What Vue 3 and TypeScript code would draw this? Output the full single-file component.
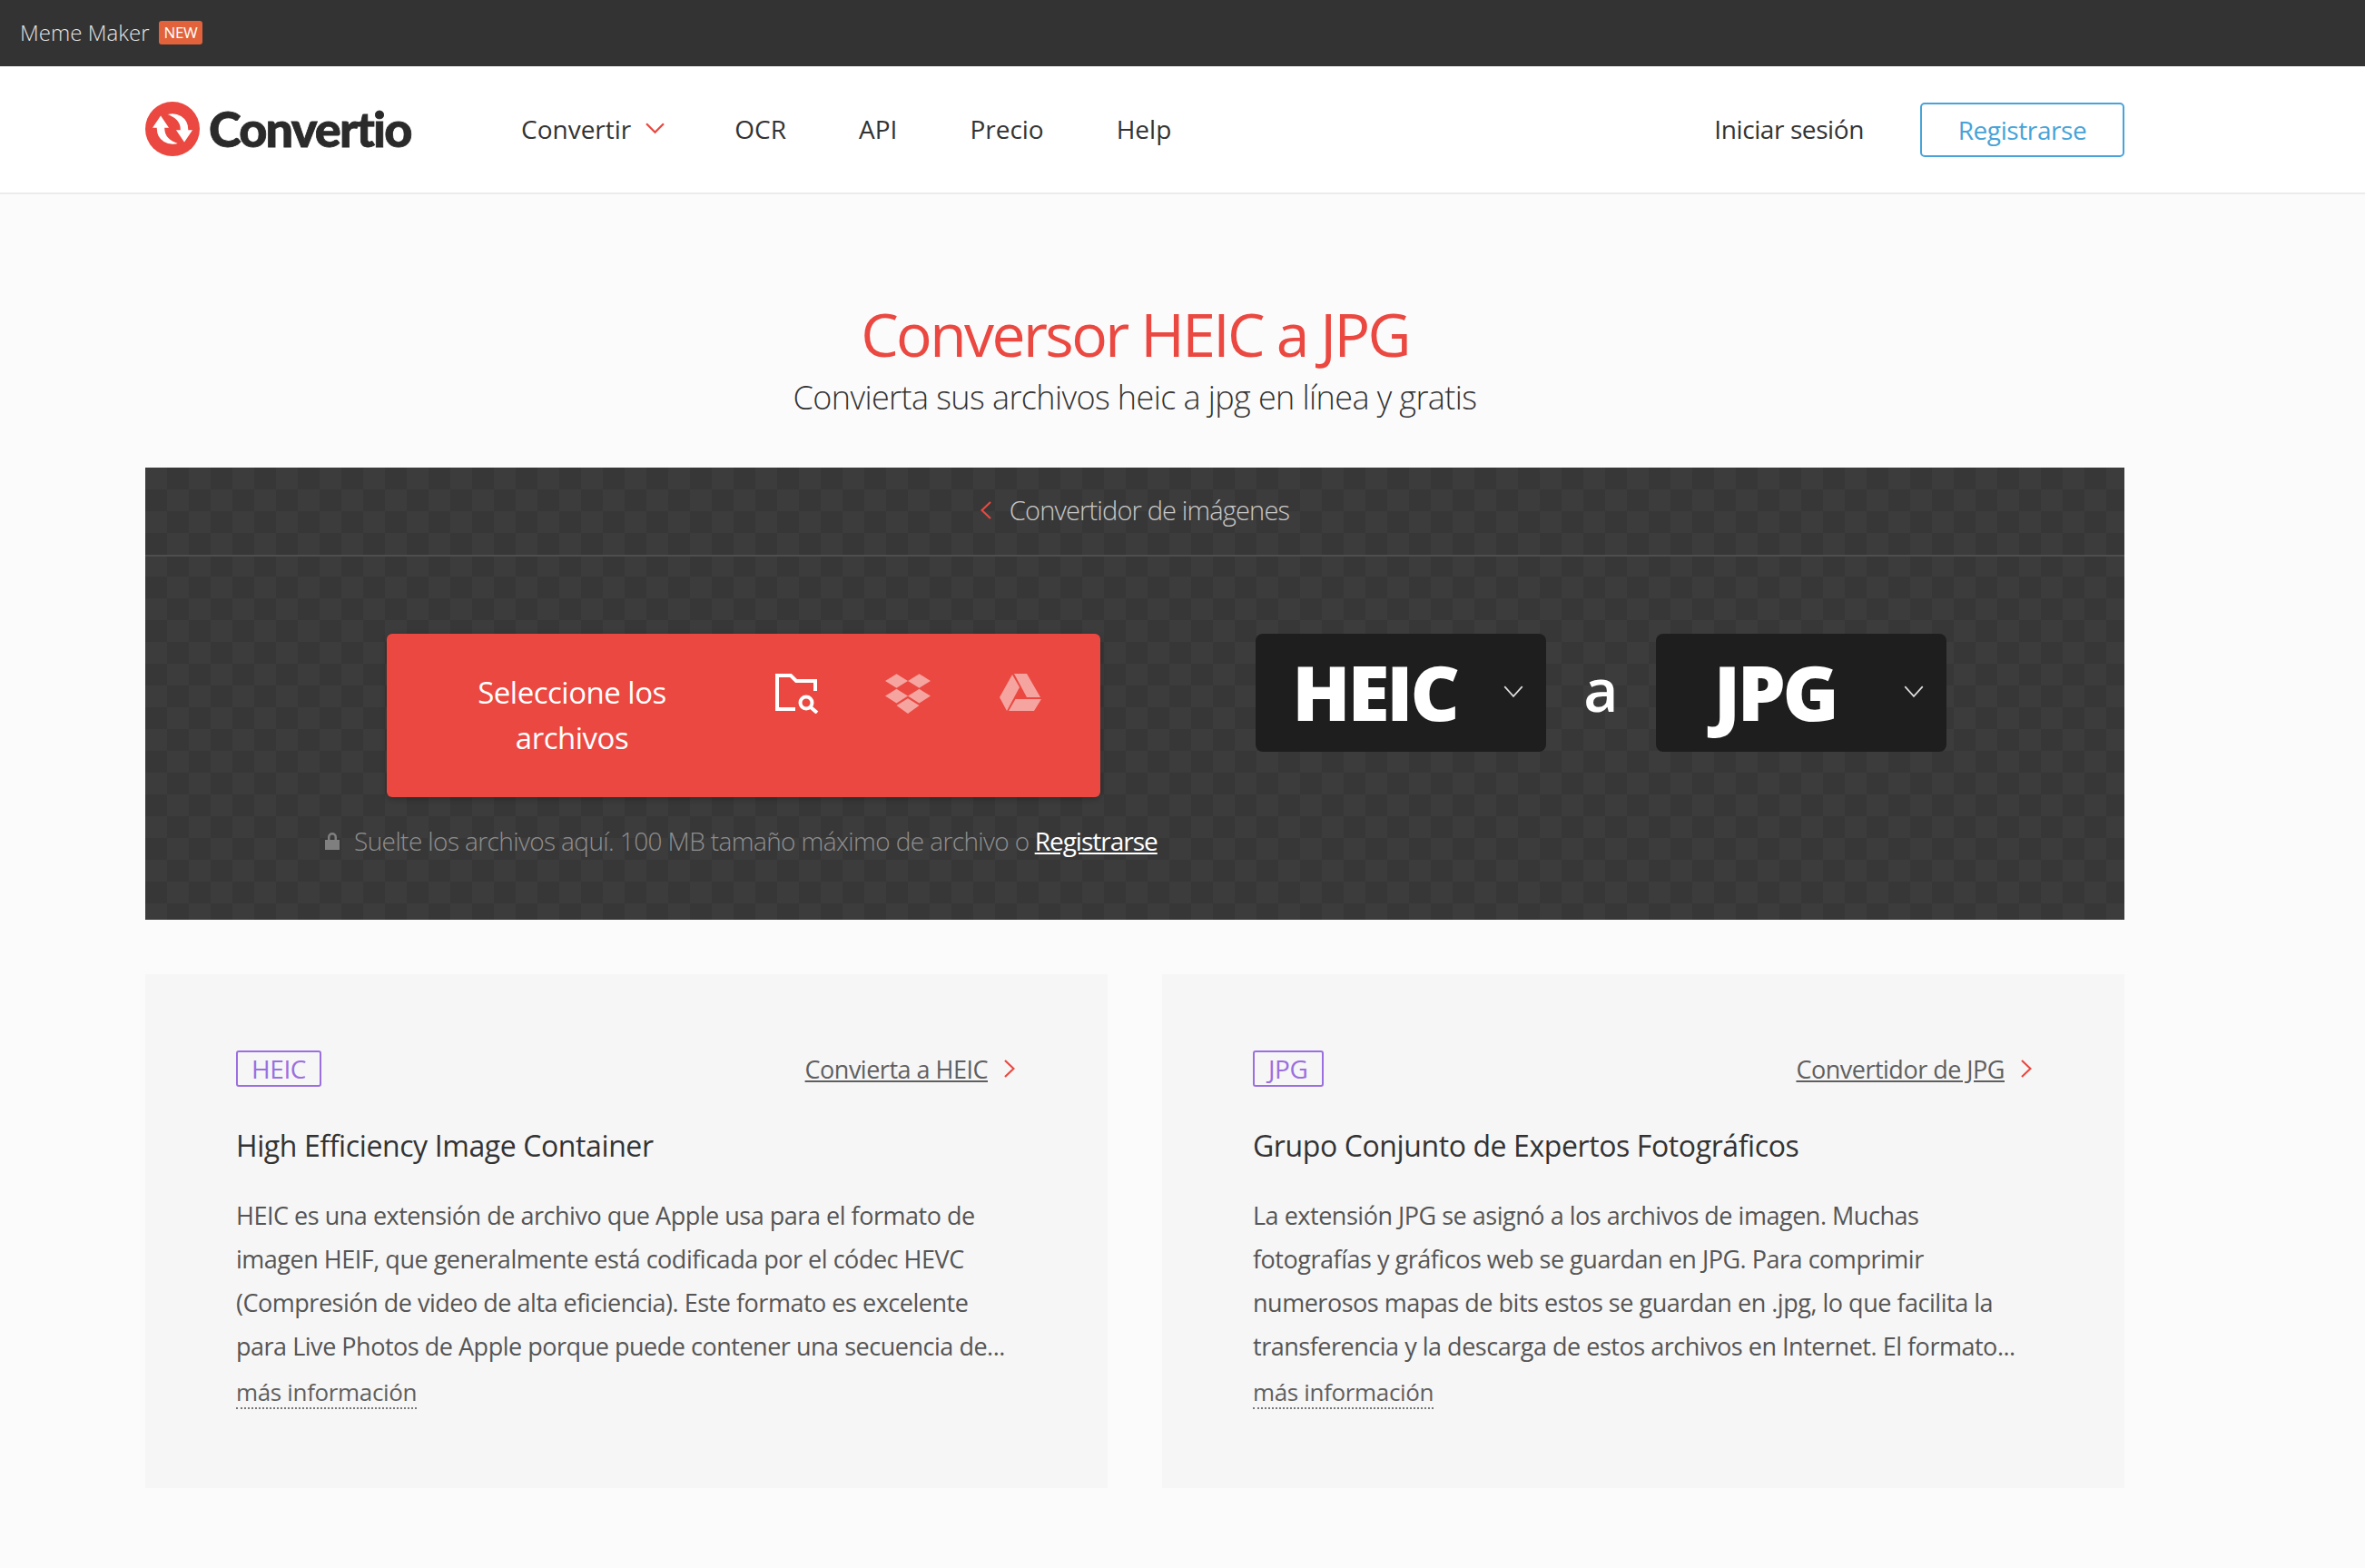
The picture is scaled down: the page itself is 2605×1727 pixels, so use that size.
<template>
  <div class="page">
    <div class="topbar">
      <a class="meme">Meme Maker</a>
      <span class="new-badge">NEW</span>
    </div>

    <header class="nav">
      <div class="brand">
        <svg class="logo-mark" viewBox="0 0 60 60">
          <circle cx="30" cy="30" r="30" fill="#ea4840" />
          <path class="logo-arrow" d="M6.500 29.500 L17 14 L27.500 29.500 H22 C22 37 28 43 38 46 C25 51 12 43 12 29.500 Z" />
          <path class="logo-arrow" d="M6.500 29.500 L17 14 L27.500 29.500 H22 C22 37 28 43 38 46 C25 51 12 43 12 29.500 Z" transform="rotate(180 30 30)" />
        </svg>
        <span class="logo-text">Convertio</span>
      </div>
      <nav class="menu">
        <a class="menu-item">
          Convertir
          <svg class="menu-caret" viewBox="0 0 20 12"><path d="M1 1 L10 10 L19 1" /></svg>
        </a>
        <a v-for="item in menuItems" :key="item" class="menu-item">{{ item }}</a>
      </nav>
      <div class="auth">
        <a class="login">Iniciar sesión</a>
        <a class="signup">Registrarse</a>
      </div>
    </header>

    <main class="main">
      <h1 class="title">Conversor HEIC a JPG</h1>
      <p class="subtitle">Convierta sus archivos heic a jpg en línea y gratis</p>

      <section class="converter">
        <div class="crumb">
          <svg class="crumb-arrow" viewBox="0 0 12 20"><path d="M11 1 L1.500 10 L11 19" /></svg>
          <span>Convertidor de imágenes</span>
        </div>

        <div class="tools">
          <div class="upload-col">
            <div class="upload">
              <div class="upload-label">Seleccione los archivos</div>
              <div class="upload-icons">
                <svg class="icon-folder" viewBox="0 0 48 44">
                  <path class="folder-line" d="M22 39 H2 V2 H17 L23 8 H44 V19" />
                  <circle class="folder-line" cx="34" cy="32" r="6.500" />
                  <path class="folder-line" d="M39 37 L46 43" />
                </svg>
                <svg class="icon-dropbox" viewBox="0 0 48 42">
                  <path d="M12 0 L24 7.500 L12 15 L0 7.500 Z M36 0 L48 7.500 L36 15 L24 7.500 Z M12 16 L24 23.500 L12 31 L0 23.500 Z M36 16 L48 23.500 L36 31 L24 23.500 Z M24 26 L36 33.500 L24 42 L12 33.500 Z" />
                </svg>
                <svg class="icon-drive" viewBox="0 0 46 41">
                  <path d="M16 0 H30 L45 26 H30 Z M14 1 L22 15 L8 41 L0 26 Z M24 28 H46 L38 41 H10 L17.500 28 Z" />
                </svg>
              </div>
            </div>
            <p class="drop-note">
              <svg class="lock" viewBox="0 0 16 20">
                <path d="M3 9 V6 A5 5 0 0 1 13 6 V9 H16 V20 H0 V9 Z M5.500 9 H10.500 V6 A2.500 2.500 0 0 0 5.500 6 Z" fill-rule="evenodd" />
              </svg>
              Suelte los archivos aquí. 100 MB tamaño máximo de archivo o
              <a class="note-link">Registrarse</a>
            </p>
          </div>

          <div class="formats">
            <div class="format">
              <span class="format-name">HEIC</span>
              <svg class="format-caret" viewBox="0 0 20 12"><path d="M1 1 L10 11 L19 1" /></svg>
            </div>
            <span class="joiner">a</span>
            <div class="format">
              <span class="format-name">JPG</span>
              <svg class="format-caret" viewBox="0 0 20 12"><path d="M1 1 L10 11 L19 1" /></svg>
            </div>
          </div>
        </div>
      </section>

      <section class="cards">
        <article v-for="card in cards" :key="card.tag" class="card">
          <div class="card-top">
            <span class="tag">{{ card.tag }}</span>
            <a class="card-link">
              <span>{{ card.link }}</span>
              <svg class="card-arrow" viewBox="0 0 12 20"><path d="M1 1 L10.500 10 L1 19" /></svg>
            </a>
          </div>
          <h2 class="card-title">{{ card.title }}</h2>
          <p class="card-text">
            <span v-for="line in card.lines" :key="line" class="card-line">{{ line }}</span>
          </p>
          <a class="more">más información</a>
        </article>
      </section>
    </main>
  </div>
</template>

<script setup lang="ts">
interface InfoCard {
  tag: string;
  link: string;
  title: string;
  lines: string[];
}

const menuItems: string[] = ['OCR', 'API', 'Precio', 'Help'];

const cards: InfoCard[] = [
  {
    tag: 'HEIC',
    link: 'Convierta a HEIC',
    title: 'High Efficiency Image Container',
    lines: [
      'HEIC es una extensión de archivo que Apple usa para el formato de',
      'imagen HEIF, que generalmente está codificada por el códec HEVC',
      '(Compresión de video de alta eficiencia). Este formato es excelente',
      'para Live Photos de Apple porque puede contener una secuencia de...',
    ],
  },
  {
    tag: 'JPG',
    link: 'Convertidor de JPG',
    title: 'Grupo Conjunto de Expertos Fotográficos',
    lines: [
      'La extensión JPG se asignó a los archivos de imagen. Muchas',
      'fotografías y gráficos web se guardan en JPG. Para comprimir',
      'numerosos mapas de bits estos se guardan en .jpg, lo que facilita la',
      'transferencia y la descarga de estos archivos en Internet. El formato...',
    ],
  },
];
</script>

<style>
body {
  background: #fbfbfb;
}
</style>

<style scoped>
.page {
  min-height: 1727px;
  background: #fbfbfb;
  font-family: "Open Sans", "Noto Sans", sans-serif;
  color: #333;
  overflow: hidden;
}

.topbar {
  height: 73px;
  box-sizing: border-box;
  background: #333;
  display: flex;
  align-items: center;
  padding: 0 0 2px 22px;
  gap: 10px;
}

.meme {
  color: #e4e4e4;
  font-size: 24px;
  font-weight: 300;
  letter-spacing: 0.05px;
}

.new-badge {
  background: #e2623b;
  color: #fff;
  font-size: 17px;
  line-height: 26px;
  padding: 0 6px;
  border-radius: 3px;
  letter-spacing: -0.4px;
}

.nav {
  height: 141px;
  box-sizing: border-box;
  padding: 0 265px 2px 160px;
  background: #fff;
  border-bottom: 2px solid #ebebeb;
  display: flex;
  align-items: center;
}

.brand {
  display: flex;
  align-items: center;
  gap: 10px;
  width: 414px;
}

.logo-mark {
  width: 60px;
  height: 60px;
  flex-shrink: 0;
}

.logo-arrow {
  fill: #fff;
  stroke: #ea4840;
  stroke-width: 1.5;
}

.logo-text {
  font-family: Lato, "Open Sans", sans-serif;
  font-weight: 900;
  font-size: 54px;
  letter-spacing: -1.8px;
  color: #2a2a2a;
  -webkit-text-stroke: 0.8px #2a2a2a;
}

.menu {
  display: flex;
  align-items: center;
  gap: 80px;
}

.menu-item {
  font-size: 28px;
  color: #333;
  display: flex;
  align-items: center;
  gap: 16px;
}

.menu-caret {
  width: 21px;
  height: 13px;
  margin-right: -3px;
}

.menu-caret path,
.crumb-arrow path,
.card-arrow path {
  fill: none;
  stroke: #ea4840;
  stroke-width: 2.2;
}

.auth {
  margin-left: auto;
  display: flex;
  align-items: center;
  gap: 62px;
}

.login {
  font-size: 28px;
  letter-spacing: -0.4px;
  color: #333;
}

.signup {
  box-sizing: border-box;
  width: 225px;
  height: 60px;
  margin-top: 2px;
  border: 2px solid #47a3d8;
  border-radius: 5px;
  color: #47a3d8;
  font-size: 28px;
  letter-spacing: -0.4px;
  display: flex;
  align-items: center;
  justify-content: center;
}

.main {
  padding: 0 265px 0 160px;
}

.title {
  margin: 112px 0 0;
  text-align: center;
  font-size: 66px;
  line-height: 82px;
  font-weight: 400;
  letter-spacing: -2.6px;
  color: #ea4840;
}

.subtitle {
  margin: 6px 0 0;
  text-align: center;
  font-size: 36px;
  line-height: 48px;
  font-weight: 300;
  letter-spacing: -0.6px;
  color: #333;
}

.converter {
  margin-top: 53px;
  height: 498px;
  background-color: #373737;
  background-image: conic-gradient(#3c3c3c 25%, transparent 0 50%, #3c3c3c 0 75%, transparent 0);
  background-size: 48px 48px;
  background-position: 24px 0;
}

.crumb {
  height: 96px;
  border-bottom: 2px solid #4e4e4e;
  display: flex;
  align-items: center;
  justify-content: center;
  gap: 20px;
  color: #c8c8c8;
  font-size: 29px;
  font-weight: 300;
  letter-spacing: -0.85px;
}

.crumb span {
  margin-bottom: 4px;
}

.crumb-arrow {
  width: 12px;
  height: 20px;
  margin-bottom: 2px;
}

.tools {
  display: flex;
  padding: 85px 196px 0 196px;
  justify-content: space-between;
}

.upload-col {
  width: 786px;
  margin-left: 70px;
}

.upload {
  height: 180px;
  background: #ea4840;
  border-radius: 6px;
  display: flex;
  box-shadow: 0 2px 6px rgba(0, 0, 0, 0.25);
}

.upload-label {
  width: 292px;
  margin: 40px 0 0 58px;
  text-align: center;
  color: #fff;
  font-size: 33px;
  line-height: 50px;
  letter-spacing: -0.5px;
}

.upload-icons {
  display: flex;
  margin: 44px 0 0 78px;
  align-items: flex-start;
}

.icon-folder {
  width: 48px;
  height: 44px;
}

.folder-line {
  fill: none;
  stroke: #fff;
  stroke-width: 4;
}

.icon-dropbox {
  width: 50px;
  height: 44px;
  margin-left: 73px;
  fill: rgba(255, 255, 255, 0.5);
}

.icon-drive {
  width: 46px;
  height: 41px;
  margin-left: 76px;
  fill: rgba(255, 255, 255, 0.5);
}

.drop-note {
  margin: 28px 0 0 -68px;
  white-space: nowrap;
  font-size: 28px;
  line-height: 40px;
  font-weight: 300;
  letter-spacing: -0.6px;
  color: #8f8f8f;
  display: flex;
  align-items: center;
  gap: 6px;
}

.lock {
  width: 16px;
  height: 20px;
  flex-shrink: 0;
  fill: #7f7f7f;
  margin-right: 10px;
}

.note-link {
  color: #fff;
  font-weight: 400;
  letter-spacing: -1px;
  text-decoration: underline;
}

.formats {
  display: flex;
  align-items: flex-start;
}

.format {
  box-sizing: border-box;
  width: 320px;
  height: 130px;
  background: #1e1e1e;
  border-radius: 8px;
  color: #fff;
  font-size: 84px;
  font-weight: 800;
  letter-spacing: -3.2px;
  display: flex;
  align-items: center;
  justify-content: space-between;
  padding: 0 25px 4px 0;
}

.format-name {
  width: 262px;
  text-align: center;
}

.format-caret {
  width: 22px;
  height: 13px;
}

.format-caret path {
  fill: none;
  stroke: #ddd;
  stroke-width: 1.6;
}

.joiner {
  width: 121px;
  text-align: center;
  color: #fff;
  font-size: 66px;
  line-height: 120px;
  font-weight: 600;
}

.cards {
  margin-top: 60px;
  display: grid;
  grid-template-columns: 1060px 1060px;
  gap: 60px;
}

.card {
  height: 566px;
  box-sizing: border-box;
  background: #f6f6f6;
  padding: 84px 100px 0;
}

.card-top {
  display: flex;
  justify-content: space-between;
  align-items: center;
  height: 40px;
}

.tag {
  box-sizing: border-box;
  height: 40px;
  padding: 0 15px;
  border: 2px solid #9b6fe0;
  border-radius: 3px;
  color: #9b6fe0;
  font-size: 28px;
  line-height: 36px;
  letter-spacing: -0.4px;
}

.card-link {
  display: flex;
  align-items: center;
  gap: 18px;
  color: #5f5f5f;
  font-size: 27px;
  letter-spacing: -0.5px;
  text-decoration: underline;
}

.card-arrow {
  width: 12px;
  height: 20px;
  margin-right: 2px;
}

.card-title {
  margin: 40px 0 0;
  font-size: 32px;
  line-height: 50px;
  font-weight: 400;
  letter-spacing: -0.4px;
  color: #333;
}

.card-text {
  margin: 28px 0 0;
  color: #555;
  font-size: 27px;
  line-height: 48px;
  letter-spacing: -0.48px;
}

.card-line {
  display: block;
  white-space: nowrap;
}

.more {
  display: inline-block;
  margin-top: 9px;
  color: #5f5f5f;
  font-size: 26px;
  line-height: 34px;
  letter-spacing: -0.34px;
  border-bottom: 2px dotted #777;
}
</style>
